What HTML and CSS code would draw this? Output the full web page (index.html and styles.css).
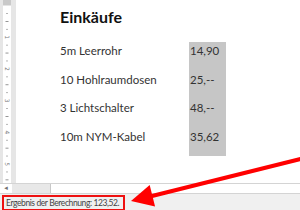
FILE: index.html
```html
<!DOCTYPE html>
<html lang="de">
<head>
<meta charset="utf-8">
<title>Einkäufe</title>
<link rel="stylesheet" href="styles.css">
</head>
<body>
<div class="app">
  <div class="main">
    <div class="ruler">
      <svg width="16" height="183" viewBox="0 0 16 183">
        <rect x="0" y="0" width="16" height="183" fill="#e6e6e6"/>
        <rect x="3" y="0" width="8" height="183" fill="#ffffff"/>
        <rect x="3" y="0" width="8" height="5.5" fill="#c9c9c9"/>
        <g fill="#8a8a8a">
          <rect x="6.3" y="13" width="1.4" height="0.9"/>
          <rect x="5.5" y="21" width="3" height="0.9"/>
          <rect x="6.3" y="28.9" width="1.4" height="0.9"/>
          <rect x="6.3" y="44.7" width="1.4" height="0.9"/>
          <rect x="5.5" y="52.6" width="3" height="0.9"/>
          <rect x="6.3" y="60.5" width="1.4" height="0.9"/>
          <rect x="6.3" y="76.4" width="1.4" height="0.9"/>
          <rect x="5.5" y="84.3" width="3" height="0.9"/>
          <rect x="6.3" y="92.2" width="1.4" height="0.9"/>
          <rect x="6.3" y="108.1" width="1.4" height="0.9"/>
          <rect x="5.5" y="116" width="3" height="0.9"/>
          <rect x="6.3" y="123.9" width="1.4" height="0.9"/>
          <rect x="6.3" y="139.8" width="1.4" height="0.9"/>
          <rect x="5.5" y="147.7" width="3" height="0.9"/>
          <rect x="6.3" y="155.6" width="1.4" height="0.9"/>
          <rect x="6.3" y="171.5" width="1.4" height="0.9"/>
          <rect x="5.5" y="179.4" width="3" height="0.9"/>
        </g>
        <g class="rdigits" fill="#7a7a7a" font-size="6" text-anchor="middle">
          <text transform="translate(5,37.2) rotate(90)">1</text>
          <text transform="translate(5,68.9) rotate(90)">2</text>
          <text transform="translate(5,100.7) rotate(90)">3</text>
          <text transform="translate(5,132.4) rotate(90)">4</text>
          <text transform="translate(5,164.1) rotate(90)">5</text>
        </g>
      </svg>
    </div>
    <div class="page">
      <h1 class="title">Einkäufe</h1>
      <div class="list">
        <div class="labels">
          <div class="row">5m Leerrohr</div>
          <div class="row">10 Hohlraumdosen</div>
          <div class="row">3 Lichtschalter</div>
          <div class="row">10m NYM-Kabel</div>
        </div>
        <div class="values">
          <div class="row">14,90</div>
          <div class="row">25,--</div>
          <div class="row">48,--</div>
          <div class="row">35,62</div>
        </div>
      </div>
    </div>
  </div>
  <div class="hscroll">
    <div class="sbtn">◂</div>
    <div class="strack"></div>
    <div class="sthumb"></div>
  </div>
  <div class="status">
    <div class="result">Ergebnis der Berechnung: 123,52.</div>
  </div>
  <div class="bottomline"></div>
  <svg class="arrow" width="300" height="210" viewBox="0 0 300 210">
    <line x1="151" y1="196.2" x2="306" y2="157.6" stroke="#ff0000" stroke-width="4"/>
    <polygon points="131,201 149.7,185 155.1,206.4" fill="#ff0000"/>
  </svg>
</div>
</body>
</html>
```

FILE: styles.css
```css
html, body {
  margin: 0;
  padding: 0;
  background: #ffffff;
}

.app {
  position: relative;
  width: 300px;
  height: 210px;
  overflow: hidden;
  display: flex;
  flex-direction: column;
  font-family: Lato, "Liberation Sans", sans-serif;
}

.main {
  display: flex;
  height: 183px;
  flex: none;
}

.ruler {
  width: 16px;
  flex: none;
}

.ruler svg {
  display: block;
}

.rdigits {
  font-family: "DejaVu Sans", sans-serif;
}

.page {
  flex: 1;
  background: #ffffff;
  padding-left: 44px;
}

.title {
  margin: 6.8px 0 0 0;
  font-size: 16px;
  line-height: 20px;
  font-weight: 700;
  color: #111111;
}

.list {
  display: flex;
  margin-top: 15.2px;
  font-size: 11.5px;
  line-height: 18px;
  color: #333333;
}

.labels, .values {
  display: flex;
  flex-direction: column;
  gap: 10.7px;
  padding-bottom: 10px;
}

.labels {
  width: 129px;
}

.values {
  width: 36px;
  padding-left: 1px;
  background: #c6c6c6;
}

.hscroll {
  display: flex;
  height: 9px;
  flex: none;
  border-top: 1px solid #d4d4d4;
  border-bottom: 1px solid #d4d4d4;
  background: #ffffff;
}

.sbtn {
  width: 12px;
  font-size: 7px;
  line-height: 9px;
  color: #707070;
  text-align: center;
  font-family: "DejaVu Sans", sans-serif;
}

.strack {
  width: 38px;
  background: #e8e8e8;
  border-right: 1px solid #c8c8c8;
}

.sthumb {
  flex: 1;
  background: #ffffff;
}

.status {
  flex: 1;
  background: #f0f0f0;
  display: flex;
  align-items: stretch;
  padding: 1px 0 0 2px;
}

.result {
  border: 2px solid #ee1111;
  border-bottom-width: 1px;
  padding: 0 4px 0 2px;
  font-size: 8.5px;
  letter-spacing: -0.4px;
  line-height: 12px;
  color: #444444;
  white-space: nowrap;
}

.bottomline {
  height: 2px;
  flex: none;
  background: #6f94d2;
}

.arrow {
  position: absolute;
  left: 0;
  top: 0;
  pointer-events: none;
}
```
